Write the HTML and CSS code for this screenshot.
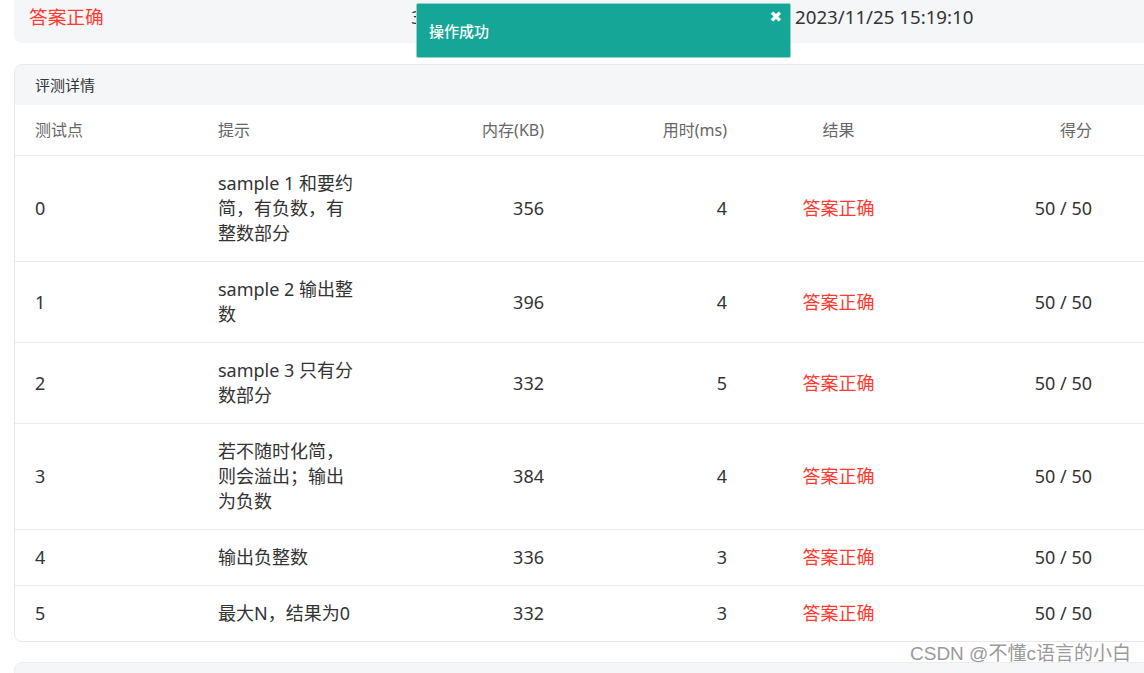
FILE: index.html
```html
<!DOCTYPE html>
<html lang="zh">
<head>
<meta charset="utf-8">
<link rel="stylesheet" href="styles.css">
</head>
<body>
<div class="page">
  <div class="summary">
    <span class="status ok">答案正确</span>
    <span class="mid">356</span>
    <span class="time">2023/11/25 15:19:10</span>
  </div>

  <div class="card">
    <div class="card-title">评测详情</div>
    <table class="detail">
      <colgroup>
        <col class="c"><col class="c"><col class="c"><col class="c"><col class="c"><col class="last">
      </colgroup>
      <thead>
        <tr>
          <th class="l">测试点</th>
          <th class="l">提示</th>
          <th class="r">内存(KB)</th>
          <th class="r">用时(ms)</th>
          <th class="m">结果</th>
          <th class="r score">得分</th>
        </tr>
      </thead>
      <tbody>
        <tr>
          <td class="l">0</td>
          <td class="l hint">sample 1 和要约简，有负数，有整数部分</td>
          <td class="r">356</td>
          <td class="r">4</td>
          <td class="m ok">答案正确</td>
          <td class="r score">50 / 50</td>
        </tr>
        <tr>
          <td class="l">1</td>
          <td class="l hint">sample 2 输出整数</td>
          <td class="r">396</td>
          <td class="r">4</td>
          <td class="m ok">答案正确</td>
          <td class="r score">50 / 50</td>
        </tr>
        <tr>
          <td class="l">2</td>
          <td class="l hint">sample 3 只有分数部分</td>
          <td class="r">332</td>
          <td class="r">5</td>
          <td class="m ok">答案正确</td>
          <td class="r score">50 / 50</td>
        </tr>
        <tr>
          <td class="l">3</td>
          <td class="l hint">若不随时化简，则会溢出；输出为负数</td>
          <td class="r">384</td>
          <td class="r">4</td>
          <td class="m ok">答案正确</td>
          <td class="r score">50 / 50</td>
        </tr>
        <tr>
          <td class="l">4</td>
          <td class="l hint">输出负整数</td>
          <td class="r">336</td>
          <td class="r">3</td>
          <td class="m ok">答案正确</td>
          <td class="r score">50 / 50</td>
        </tr>
        <tr>
          <td class="l">5</td>
          <td class="l hint">最大N，结果为0</td>
          <td class="r">332</td>
          <td class="r">3</td>
          <td class="m ok">答案正确</td>
          <td class="r score">50 / 50</td>
        </tr>
      </tbody>
    </table>
  </div>

  <div class="next-card"></div>
</div>

<div class="toast">
  <span class="toast-text">操作成功</span>
  <span class="toast-close">✖</span>
</div>

<div class="watermark">CSDN @不懂c语言的小白</div>
</body>
</html>
```

FILE: styles.css
```css
html, body {
  margin: 0;
  padding: 0;
  background: #ffffff;
  overflow: hidden;
  width: 1144px;
  height: 673px;
}

body {
  font-family: "Noto Sans", "Noto Sans CJK SC", sans-serif;
  color: #333333;
  position: relative;
}

.page {
  padding-left: 14px;
  width: 1186px;
}

.summary {
  height: 43px;
  background: #f5f6f8;
  border-radius: 0 0 8px 8px;
  display: flex;
  align-items: flex-start;
  font-size: 18.7px;
  line-height: 24px;
  padding-top: 5px;
  box-sizing: border-box;
}

.summary .status {
  margin-left: 15px;
  width: 382px;
}

.summary .mid {
  width: 384px;
}

.summary .time {
  color: #333333;
}

.ok {
  color: #ff3a30;
}

.card {
  margin-top: 21px;
  border: 1px solid #e9e9eb;
  border-radius: 8px;
  overflow: hidden;
  background: #ffffff;
}

.card-title {
  height: 40px;
  background: #f5f6f8;
  font-size: 15px;
  line-height: 40px;
  padding-left: 20px;
  color: #333333;
}

.detail {
  border-collapse: collapse;
  table-layout: fixed;
  width: 100%;
}

.detail col.c {
  width: 183px;
}

.detail th {
  height: 50px;
  padding: 0 20px;
  font-size: 16px;
  font-weight: normal;
  color: #666666;
  border-bottom: 1px solid #ebebeb;
  line-height: 50px;
  box-sizing: border-box;
}

.detail td {
  padding: 15px 20px;
  font-size: 18px;
  line-height: 25px;
  color: #333333;
  border-bottom: 1px solid #ebebeb;
}

.detail tbody tr:last-child td {
  border-bottom: none;
}

.detail .l { text-align: left; }
.detail .r { text-align: right; }
.detail .m { text-align: center; }

.detail .score {
  padding-right: 107px;
}

.detail td.ok {
  color: #ff3a30;
}

.detail td.hint {
  word-break: break-all;
}

.next-card {
  margin-top: 20px;
  height: 40px;
  background: #f5f6f8;
  border-radius: 8px 8px 0 0;
  border: 1px solid #eeeef0;
}

.toast {
  position: absolute;
  left: 416px;
  top: 3px;
  width: 375px;
  height: 55px;
  box-sizing: border-box;
  background: #16a697;
  border: 1px solid #8fd3c7;
  border-radius: 2px;
  color: #ffffff;
}

.toast-text {
  position: absolute;
  left: 12px;
  top: 16px;
  font-size: 15px;
  line-height: 22px;
  font-weight: 500;
}

.toast-close {
  position: absolute;
  right: 8px;
  top: 3px;
  font-size: 15px;
  line-height: 20px;
  font-weight: bold;
  color: #ffffff;
  font-family: "DejaVu Sans", sans-serif;
}

.watermark {
  position: absolute;
  left: 910px;
  top: 641px;
  font-size: 19px;
  line-height: 26px;
  color: #9a9a9a;
  font-family: "Liberation Sans", "Noto Sans CJK SC", sans-serif;
  text-shadow: 0 0 2px #ffffff, 0 0 1px #ffffff;
  white-space: nowrap;
}
```
